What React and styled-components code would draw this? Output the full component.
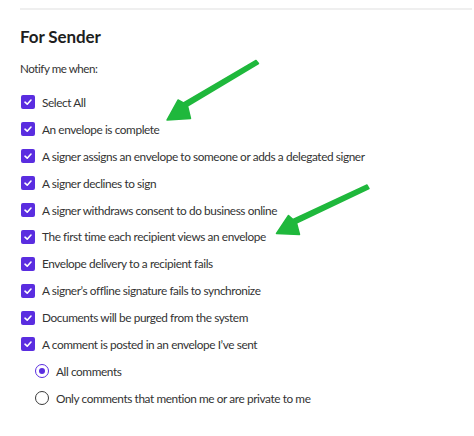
import React from 'react';
import styled, { createGlobalStyle } from 'styled-components';

const GlobalStyle = createGlobalStyle`
  html, body { margin: 0; padding: 0; background: #fff; }
  body { font-family: Lato, "Noto Sans", sans-serif; color: #2b2b2b; }
`;

const Page = styled.div`
  position: relative;
  width: 474px;
  height: 436px;
  overflow: hidden;
  padding: 8px 0 0 20px;
  box-sizing: border-box;
`;

const Rule = styled.div`
  height: 2px;
  background: #efefef;
  margin-right: 2px;
`;

const Title = styled.h2`
  margin: 16px 0 0;
  font-size: 17px;
  font-weight: 700;
  color: #1e1e1e;
  line-height: 22px;
  letter-spacing: -0.1px;
`;

const Lead = styled.p`
  margin: 12px 0 0;
  font-size: 11.6px;
  line-height: 18px;
  color: #333;
  letter-spacing: -0.45px;
`;

const List = styled.div`
  display: flex;
  flex-direction: column;
  margin-top: 11px;
`;

const Row = styled.label`
  display: flex;
  align-items: center;
  gap: 7px;
  height: 26.9px;
  padding-left: ${p => (p.$nested ? '15px' : '1px')};
  font-size: 11.8px;
  color: #333;
  letter-spacing: -0.4px;
`;

const Box = styled.span`
  width: 14px;
  height: 14px;
  border-radius: 2px;
  background: #5a2de0;
  display: flex;
  align-items: center;
  justify-content: center;
  flex-shrink: 0;
`;

const Radio = styled.span`
  width: 14px;
  height: 14px;
  border-radius: 50%;
  box-sizing: border-box;
  border: 1.5px solid ${p => (p.$on ? '#5a2de0' : '#3a3a3a')};
  display: flex;
  align-items: center;
  justify-content: center;
  flex-shrink: 0;
  &::after {
    content: '';
    display: ${p => (p.$on ? 'block' : 'none')};
    width: 6px;
    height: 6px;
    border-radius: 50%;
    background: #5a2de0;
  }
`;

const Overlay = styled.svg`
  position: absolute;
  left: 0;
  top: 0;
  pointer-events: none;
`;

const Tick = () => (
  <svg width="10" height="10" viewBox="0 0 10 10">
    <path d="M2 5.2 L4.2 7.2 L8 3" fill="none" stroke="#fff" strokeWidth="1.6" strokeLinecap="round" strokeLinejoin="round" />
  </svg>
);

const items = [
  'Select All',
  'An envelope is complete',
  'A signer assigns an envelope to someone or adds a delegated signer',
  'A signer declines to sign',
  'A signer withdraws consent to do business online',
  'The first time each recipient views an envelope',
  'Envelope delivery to a recipient fails',
  'A signer\u2019s offline signature fails to synchronize',
  'Documents will be purged from the system',
  'A comment is posted in an envelope I\u2019ve sent',
];

const radios = [
  { label: 'All comments', on: true },
  { label: 'Only comments that mention me or are private to me', on: false },
];

export default function App() {
  return (
    <>
      <GlobalStyle />
      <Page>
        <Rule />
        <Title>For Sender</Title>
        <Lead>Notify me when:</Lead>
        <List>
          {items.map(t => (
            <Row key={t}>
              <Box><Tick /></Box>
              {t}
            </Row>
          ))}
          {radios.map(r => (
            <Row key={r.label} $nested>
              <Radio $on={r.on} />
              {r.label}
            </Row>
          ))}
        </List>
        <Overlay width="474" height="436" viewBox="0 0 474 436">
          <path d="M256 60.5 L258.5 63.5 L187.5 106 L190.5 118.5 L167 120 L178 100 L183.5 103 Z" fill="#1fb83c" strokeLinejoin="round" stroke="#1fb83c" strokeWidth="1.5" />
          <path d="M367 185 L369 188.5 L296.5 223 L299.5 234.5 L276.5 233.5 L288.5 215.5 L293 219.5 Z" fill="#1fb83c" strokeLinejoin="round" stroke="#1fb83c" strokeWidth="1.5" />
        </Overlay>
      </Page>
    </>
  );
}
